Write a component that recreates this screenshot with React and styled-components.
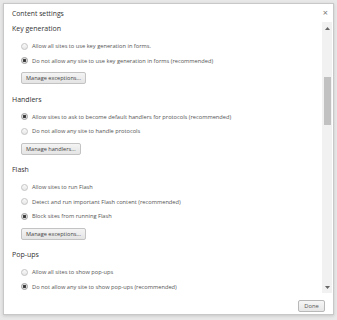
import React from 'react';
import styled, { createGlobalStyle } from 'styled-components';

const GlobalStyle = createGlobalStyle`
  html, body {
    margin: 0;
    padding: 0;
    background: #e8e8e8;
  }
  * { box-sizing: border-box; }
`;

const sections = [
  {
    title: 'Key generation',
    options: [
      'Allow all sites to use key generation in forms.',
      'Do not allow any site to use key generation in forms (recommended)',
    ],
    selected: 1,
    button: 'Manage exceptions...',
  },
  {
    title: 'Handlers',
    options: [
      'Allow sites to ask to become default handlers for protocols (recommended)',
      'Do not allow any site to handle protocols',
    ],
    selected: 0,
    button: 'Manage handlers...',
  },
  {
    title: 'Flash',
    options: [
      'Allow sites to run Flash',
      'Detect and run important Flash content (recommended)',
      'Block sites from running Flash',
    ],
    selected: 2,
    button: 'Manage exceptions...',
  },
  {
    title: 'Pop-ups',
    options: [
      'Allow all sites to show pop-ups',
      'Do not allow any site to show pop-ups (recommended)',
    ],
    selected: 1,
  },
];

export default function App() {
  return (
    <Page>
      <GlobalStyle />
      <Dialog>
        <Header>
          <Title>Content settings</Title>
          <Close>×</Close>
        </Header>
        <Body>
          <Content>
            {sections.map(s => (
              <Section key={s.title}>
                <Heading>{s.title}</Heading>
                <Options>
                  {s.options.map((o, i) => (
                    <Option key={o}>
                      <Radio checked={i === s.selected} />
                      <Label>{o}</Label>
                    </Option>
                  ))}
                </Options>
                {s.button && <SmallButton>{s.button}</SmallButton>}
              </Section>
            ))}
          </Content>
          <Scrollbar>
            <Arrow>
              <svg width="5" height="3" viewBox="0 0 5 3"><path d="M0 3L2.5 0L5 3Z" fill="#666" /></svg>
            </Arrow>
            <Track>
              <Thumb />
            </Track>
            <Arrow>
              <svg width="5" height="3" viewBox="0 0 5 3"><path d="M0 0L2.5 3L5 0Z" fill="#666" /></svg>
            </Arrow>
          </Scrollbar>
        </Body>
        <Footer>
          <DoneButton>Done</DoneButton>
        </Footer>
      </Dialog>
    </Page>
  );
}

const Page = styled.div`
  width: 337px;
  height: 320px;
  padding: 3px 3px 5px 3px;
  font-family: 'Open Sans', 'Noto Sans', sans-serif;
  font-size: 6px;
`;

const Dialog = styled.div`
  width: 331px;
  height: 312px;
  background: #fff;
  border: 1px solid #c8c8c8;
  box-shadow: 0 1px 3px rgba(0, 0, 0, 0.15);
  display: flex;
  flex-direction: column;
`;

const Header = styled.div`
  height: 18px;
  display: flex;
  align-items: flex-start;
  justify-content: space-between;
  padding: 4px 5px 0 8px;
`;

const Title = styled.div`
  font-size: 6.8px;
  line-height: 12px;
  color: #333;
`;

const Close = styled.div`
  font-size: 9px;
  line-height: 10px;
  color: #777;
`;

const Body = styled.div`
  height: 271px;
  display: flex;
  overflow: hidden;
`;

const Content = styled.div`
  flex: 1;
  padding-left: 8px;
  overflow: hidden;
`;

const Section = styled.div`
  padding-bottom: 8.5px;
`;

const Heading = styled.div`
  font-size: 7px;
  line-height: 12px;
  color: #333;
  margin-top: 1px;
`;

const Options = styled.div`
  margin-top: 4px;
  padding-left: 8.5px;
`;

const Option = styled.div`
  height: 14.5px;
  display: flex;
  align-items: center;
  gap: 4.5px;
`;

const Radio = styled.span`
  width: 7px;
  height: 7px;
  border-radius: 50%;
  flex: none;
  border: 1px solid ${p => (p.checked ? '#9a9a9a' : '#c4c4c4')};
  background: ${p =>
    p.checked
      ? 'radial-gradient(circle, #333 0, #444 1.4px, #ddd 1.9px, #eee 100%)'
      : 'linear-gradient(#fafafa, #e6e6e6)'};
`;

const Label = styled.span`
  font-size: 5.7px;
  line-height: 8px;
  color: #555;
  white-space: nowrap;
`;

const SmallButton = styled.div`
  margin: 4px 0 0 9px;
  height: 12px;
  width: fit-content;
  display: flex;
  align-items: center;
  padding: 0 4px;
  border: 1px solid #c3c3c3;
  border-radius: 2px;
  background: linear-gradient(#f4f4f4, #e4e4e4);
  font-size: 5.6px;
  line-height: 8px;
  color: #444;
  white-space: nowrap;
`;

const Scrollbar = styled.div`
  width: 10px;
  margin-right: 1px;
  background: #f1f1f1;
  display: flex;
  flex-direction: column;
`;

const Arrow = styled.div`
  height: 12px;
  display: flex;
  align-items: center;
  justify-content: center;
`;

const Track = styled.div`
  flex: 1;
  padding: 43px 1px 0 2px;
`;

const Thumb = styled.div`
  height: 48px;
  background: #c1c1c1;
`;

const Footer = styled.div`
  flex: 1;
  display: flex;
  justify-content: flex-end;
  align-items: flex-start;
  padding: 7px 8px 0 0;
`;

const DoneButton = styled.div`
  width: 27px;
  height: 12px;
  display: flex;
  align-items: center;
  justify-content: center;
  border: 1px solid #b8b8b8;
  border-radius: 2px;
  background: linear-gradient(#f6f6f6, #e6e6e6);
  font-size: 5.8px;
  line-height: 8px;
  color: #555;
`;
